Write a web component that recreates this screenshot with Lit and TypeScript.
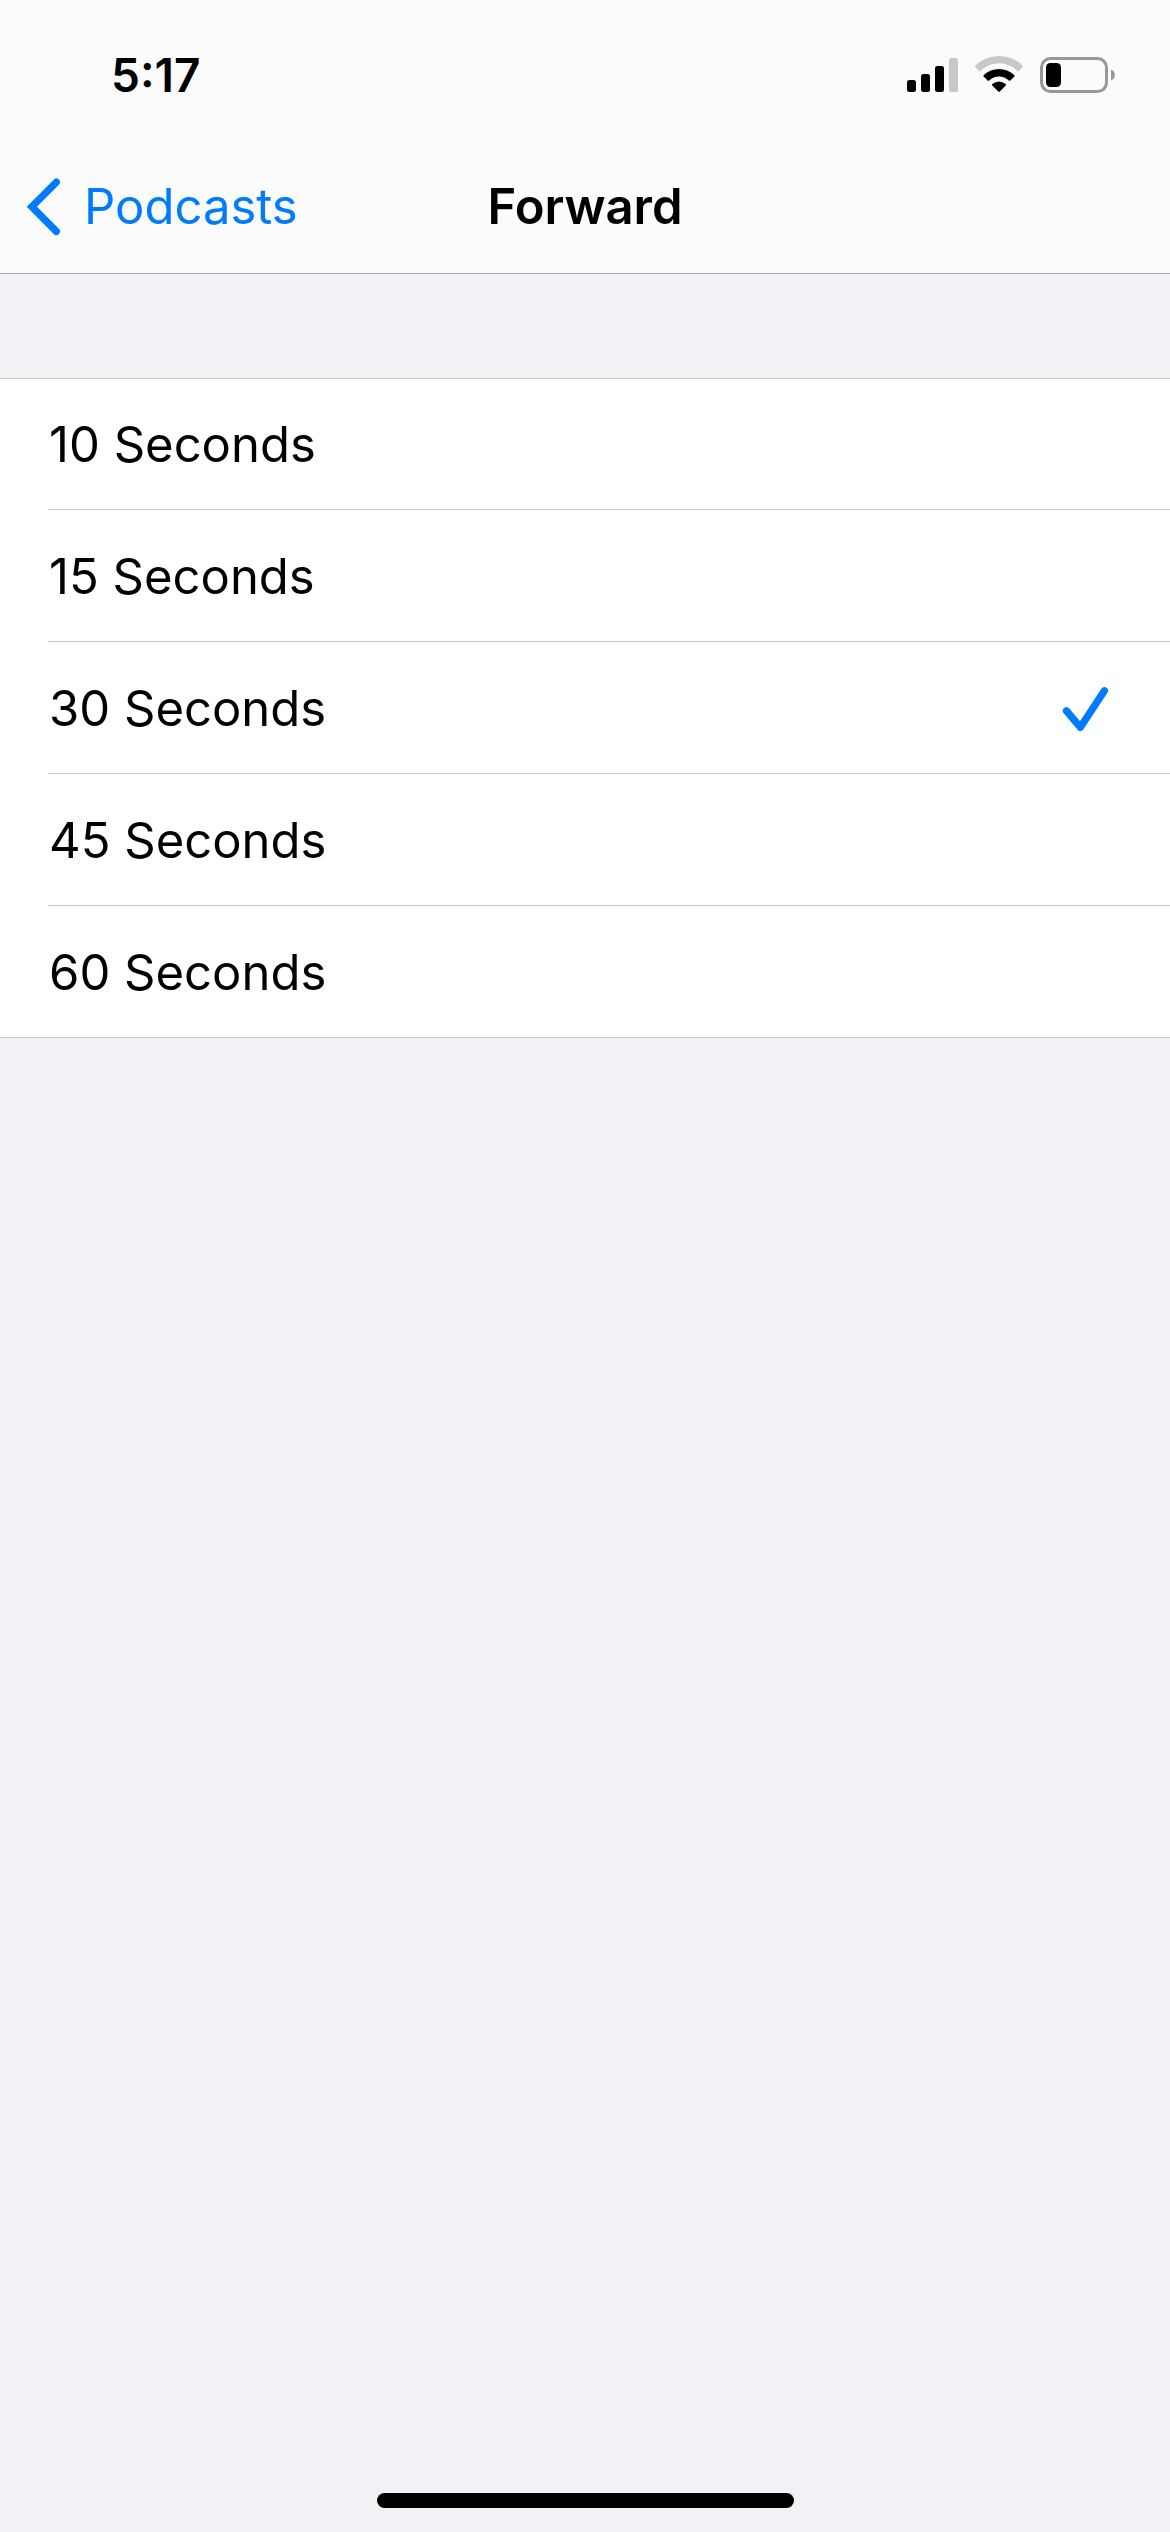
import { LitElement, html, css, svg } from "lit";
import { customElement, property, state } from "lit/decorators.js";

@customElement("status-bar")
class StatusBar extends LitElement {
  @property() time = "";

  static styles = css`
    :host {
      display: flex;
      justify-content: space-between;
      align-items: center;
      box-sizing: border-box;
      height: 141px;
      padding: 8px 54px 0 111px;
    }
    .time {
      font-size: 46px;
      line-height: 56px;
      font-weight: 600;
    }
    .icons {
      display: flex;
      align-items: center;
      gap: 16px;
    }
    svg {
      display: block;
    }
  `;

  render() {
    return html`
      <time class="time">${this.time}</time>
      <div class="icons">
        <svg width="52" height="38" viewBox="906 55 52 38" role="img" aria-label="Signal: 3 of 4 bars">
          <rect x="907" y="79" width="9" height="12" rx="2.5" />
          <rect x="921" y="73" width="9" height="18" rx="2.5" />
          <rect x="935" y="65" width="9" height="26" rx="2.5" />
          <rect x="949" y="57" width="9" height="34" rx="2.5" fill="#c8c8ca" />
        </svg>
        <svg width="50" height="38" viewBox="974 55 50 38" role="img" aria-label="Wi-Fi">
          <path
            d="M999 55C990 55 981.500 58.500 975.300 64.700Q974.500 65.500 975.300 66.300L979 70Q979.800 70.800 980.600 70Q988.500 62.300 999 62.300T1017.400 70Q1018.200 70.800 1019 70L1022.700 66.300Q1023.500 65.500 1022.700 64.700C1016.500 58.500 1008 55 999 55Z"
            fill="#c8c8ca"
          />
          <path
            d="M999 68Q990.200 68 983.700 74Q982.900 74.800 983.700 75.600L987.600 79.400Q988.400 80.100 989.200 79.400Q993.400 75.500 999 75.500T1008.800 79.400Q1009.600 80.100 1010.400 79.400L1014.300 75.600Q1015.100 74.800 1014.300 74Q1007.800 68 999 68Z"
          />
          <path
            d="M999 80.500Q995.300 80.500 992.300 83Q991.500 83.800 992.300 84.600L998.200 90.500Q999 91.300 999.800 90.500L1005.700 84.600Q1006.500 83.800 1005.700 83Q1002.700 80.500 999 80.500Z"
          />
        </svg>
        <svg width="76" height="38" viewBox="1040 55 76 38" role="img" aria-label="Battery low">
          <rect x="1041.500" y="57.500" width="65" height="33" rx="9" fill="none" stroke="#98989a" stroke-width="3" />
          <rect x="1046" y="62" width="15" height="24" rx="4.500" />
          <path d="M1111 68.500C1116.200 70.500 1116.200 77.500 1111 79.500Z" fill="#98989a" />
        </svg>
      </div>
    `;
  }
}

@customElement("nav-bar")
class NavBar extends LitElement {
  @property() heading = "";
  @property() back = "";

  static styles = css`
    :host {
      display: grid;
      grid-template-columns: 1fr auto 1fr;
      align-items: center;
      height: 132px;
      padding: 0 24px;
      border-bottom: 1px solid #a9a9ab;
    }
    .back {
      display: flex;
      align-items: center;
      justify-self: start;
      gap: 20px;
      color: #007aff;
      text-decoration: none;
    }
    .back,
    .heading {
      margin: 0;
      font-size: 49px;
      line-height: 60px;
    }
    .heading {
      font-weight: 600;
    }
  `;

  render() {
    return html`
      <a class="back" href="#podcasts">
        <svg width="40" height="60" viewBox="24 177 40 60" aria-hidden="true">
          <path
            d="M56.300 182.200L31.900 206.800L56.300 231.300"
            fill="none"
            stroke="#007aff"
            stroke-width="7.300"
            stroke-linecap="round"
            stroke-linejoin="miter"
          />
        </svg>
        <span>${this.back}</span>
      </a>
      <h1 class="heading">${this.heading}</h1>
    `;
  }
}

@customElement("app-root")
class AppRoot extends LitElement {
  @state() private selected = 30;

  private readonly options = [10, 15, 30, 45, 60];

  static styles = css`
    :host {
      display: flex;
      flex-direction: column;
      min-height: 100vh;
      background: #f2f1f6;
      color: #000;
      font-family: Inter, "Liberation Sans", sans-serif;
    }
    .top {
      background: #fbfbfc;
    }
    .content {
      flex: 1;
      padding-top: 104px;
    }
    .list {
      margin: 0;
      padding: 0 0 0 48px;
      border: 0;
      background: #fff;
      box-shadow: inset 0 1px #c6c6c8, inset 0 -1px #c6c6c8;
    }
    .row {
      display: flex;
      align-items: center;
      justify-content: space-between;
      box-sizing: border-box;
      height: 132px;
      padding: 2px 60px 0 1px;
      border-bottom: 1px solid #c6c6c8;
      font-size: 49px;
      line-height: 60px;
      cursor: pointer;
    }
    .radio {
      appearance: none;
      position: absolute;
      width: 1px;
      height: 1px;
      margin: 0;
      opacity: 0;
    }
    .home {
      align-self: center;
      width: 36%;
      max-width: 417px;
      height: 15px;
      margin-bottom: 24px;
      border-radius: 8px;
      background: #000;
    }
  `;

  private checkmark() {
    return svg`<svg width="48" height="48" viewBox="1062 685 48 48" aria-hidden="true">
      <path
        d="M1066.500 710.800L1080.400 727.300L1104.400 690.800"
        fill="none"
        stroke="#007aff"
        stroke-width="7.300"
        stroke-linecap="round"
        stroke-linejoin="round"
      />
    </svg>`;
  }

  render() {
    return html`
      <header class="top">
        <status-bar time="5:17"></status-bar>
        <nav-bar back="Podcasts" heading="Forward"></nav-bar>
      </header>
      <main class="content">
        <fieldset class="list" aria-label="Forward">
          ${this.options.map(
            (n) => html`
              <label class="row">
                <span>${n} Seconds</span>
                <input
                  class="radio"
                  type="radio"
                  name="forward"
                  .value=${String(n)}
                  .checked=${n === this.selected}
                  @change=${() => (this.selected = n)}
                />
                ${n === this.selected ? this.checkmark() : null}
              </label>
            `
          )}
        </fieldset>
      </main>
      <div class="home"></div>
    `;
  }
}
